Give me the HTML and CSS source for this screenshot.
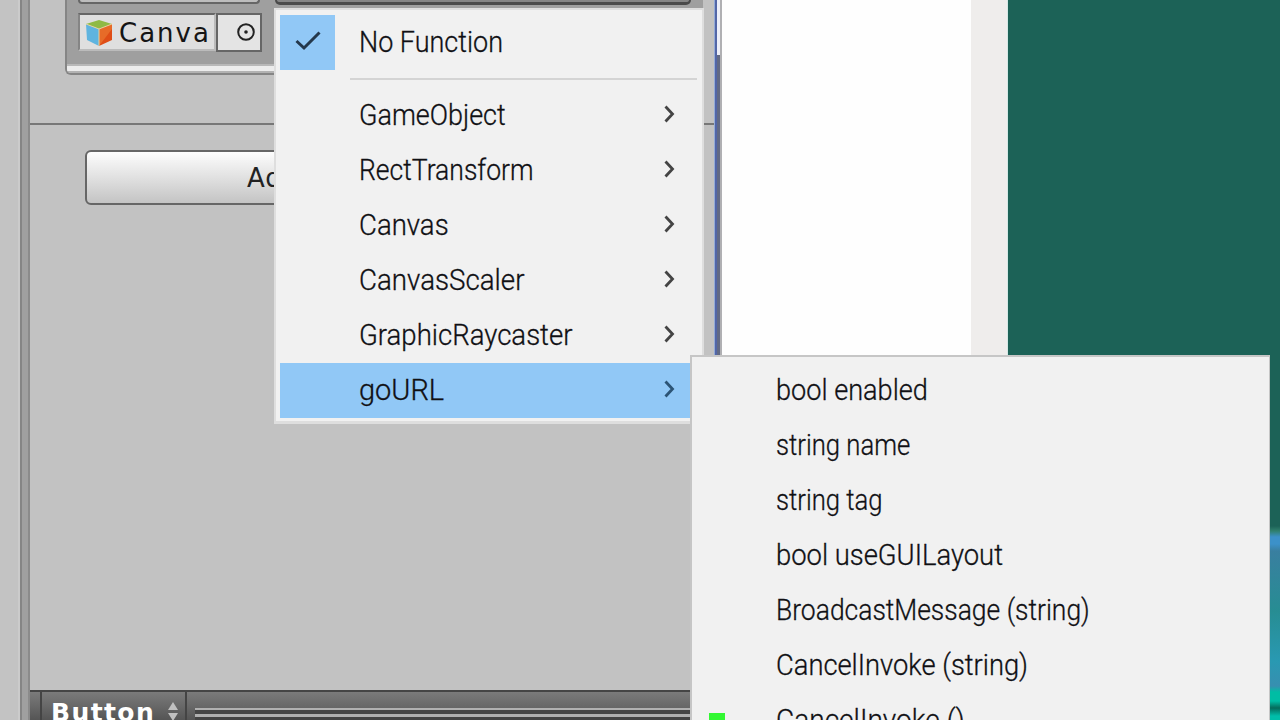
FILE: index.html
```html
<!DOCTYPE html>
<html lang="en">
<head>
<meta charset="utf-8">
<title>Inspector</title>
<link rel="stylesheet" href="styles.css">
</head>
<body>
<svg class="defs"><symbol id="chev" viewBox="0 0 14 22"><path d="M2.500 3.500 9.500 11 2.500 18.500" fill="none" stroke="currentColor" stroke-width="2.800"/></symbol></svg>
<div class="screen">
  <div class="gutter"></div>
  <div class="splitter"></div>
  <main class="inspector">
    <section class="component">
      <div class="event-box">
        <div class="event-body">
          <div class="fields-top"><div class="field-end"></div><div class="function-end"></div></div>
          <div class="object-field">
            <div class="object-name">
              <svg class="cube" viewBox="0 0 28 28"><path d="M14 1 27 5 14 10 1 5z" fill="#8fba45"/><path d="M1 5 14 10v17L2 21z" fill="#5fb4df"/><path d="M14 10 27 5v16l-13 6z" fill="#df4d16"/><path d="M14 10 27 5v5l-13 17z" fill="#e76b28"/><path d="M1 5 14 10 27 5M14 10v17" fill="none" stroke="#e4d2a1"/></svg>
              <span>Canva</span>
            </div>
            <div class="picker"><svg viewBox="0 0 20 20"><circle cx="10" cy="10" r="7.800" fill="none" stroke="#222" stroke-width="2"/><circle cx="10" cy="10" r="1.800" fill="#222"/></svg></div>
          </div>
        </div>
        <div class="event-foot"></div>
      </div>
    </section>
    <section class="add-area"><div class="add-button"><span>Ad</span></div></section>
    <footer class="preview">
      <div class="preview-pad"></div>
      <div class="preview-name"><span>Button</span><svg viewBox="0 0 10 20"><path d="M5 0 10 8H0zM0 11h10L5 19z" fill="#c0c0c0"/></svg></div>
      <div class="preview-grip"></div>
    </footer>
  </main>
  <div class="window-edge"><div class="edge-top"></div></div>
  <div class="page-white"></div>
  <div class="page-margin"></div>
  <div class="desktop"><div class="wallpaper"></div></div>
</div>

<nav class="menu functions">
  <div class="item checked"><div class="check"><svg viewBox="0 0 28 22"><path d="M2.500 11 10 18 25.500 2.500" fill="none" stroke="#24384c" stroke-width="3"/></svg></div><span class="t1">No Function</span></div>
  <div class="separator"></div>
  <div class="item"><span class="t2">GameObject</span><svg class="arrow"><use href="#chev"/></svg></div>
  <div class="item"><span class="t3">RectTransform</span><svg class="arrow"><use href="#chev"/></svg></div>
  <div class="item"><span class="t4">Canvas</span><svg class="arrow"><use href="#chev"/></svg></div>
  <div class="item"><span class="t5">CanvasScaler</span><svg class="arrow"><use href="#chev"/></svg></div>
  <div class="item"><span class="t6">GraphicRaycaster</span><svg class="arrow"><use href="#chev"/></svg></div>
  <div class="item selected"><span class="t7">goURL</span><svg class="arrow"><use href="#chev"/></svg></div>
</nav>

<nav class="menu members">
  <div class="item"><span class="m1">bool enabled</span></div>
  <div class="item"><span class="m2">string name</span></div>
  <div class="item"><span class="m3">string tag</span></div>
  <div class="item"><span class="m4">bool useGUILayout</span></div>
  <div class="item"><span class="m5">BroadcastMessage (string)</span></div>
  <div class="item"><span class="m6">CancelInvoke (string)</span></div>
  <div class="item"><i class="marker"></i><span class="m7">CancelInvoke ()</span></div>
</nav>
</body>
</html>
```
FILE: styles.css
```css
* { box-sizing: border-box; }
body { margin: 0; width: 1280px; height: 720px; overflow: hidden; position: relative; background: #c2c2c2; }
.defs { position: absolute; width: 0; height: 0; }
.screen { display: flex; height: 720px; }
.gutter { width: 20px; background: #c3c3c3; border-right: 2px solid #cbcbcb; }
.splitter { width: 10px; background: #a0a0a0; border-left: 2px solid #858585; border-right: 2px solid #8b8b8b; }
.inspector { width: 684px; display: flex; flex-direction: column; background: #c2c2c2; }
.component { height: 125px; padding-left: 35px; border-bottom: 2px solid #777; }
.event-box { height: 75px; border: solid #858585; border-width: 0 0 2px 2px; border-bottom-left-radius: 6px; display: flex; flex-direction: column; width: 638px; overflow: hidden; }
.event-body { height: 64px; background: #9f9f9f; padding-left: 11px; }
.event-foot { flex: 1; background: linear-gradient(#b8b8b8 0 2px, #ececec 2px 7px, #b2b2b2 7px); }
.fields-top { display: flex; gap: 15px; height: 13px; }
.field-end { width: 182px; height: 4px; background: #bdbdbd; border: solid #666; border-width: 0 2px 2px; border-radius: 0 0 5px 5px; }
.function-end { width: 416px; height: 5px; background: #858585; border: solid #4a4a4a; border-width: 0 2px 3px; border-radius: 0 0 6px 6px; }
.object-field { display: flex; width: 184px; height: 39px; }
.object-name { width: 138px; height: 38px; display: flex; align-items: center; background: #dfdfdf; border: 2px solid #bbb; border-top-color: #666; border-left-color: #858585; padding: 2px 0 0 5px; gap: 5px; font: 26px/34px "DejaVu Sans", sans-serif; color: #151515; }
.object-name span { letter-spacing: 2px; margin-left: 1px; }
.cube { width: 28px; height: 28px; flex: none; }
.picker { width: 46px; border: 2px solid #666; background: #e4e4e4; padding: 7px 0 0 18px; }
.picker svg { width: 20px; height: 20px; display: block; }
.add-area { height: 565px; padding: 25px 0 0 55px; }
.add-button { width: 414px; height: 55px; border: 2px solid #666; border-radius: 6px; background: linear-gradient(#fdfdfd, #e2e2e2 48%, #c4c4c4); padding-left: 160px; font: 26px/52px "DejaVu Sans", sans-serif; color: #222; letter-spacing: 1px; }
.preview { height: 30px; display: flex; background: linear-gradient(#7b7b7b, #555); border-top: 2px solid #454545; }
.preview-pad { width: 12px; border-right: 2px solid #444; }
.preview-name { width: 145px; border-right: 2px solid #444; padding: 6px 7px 0 9px; display: flex; justify-content: space-between; overflow: hidden; font: bold 25px/29px "DejaVu Sans", sans-serif; color: #fff; }
.preview-name span { letter-spacing: 1.400px; }
.preview-name svg { width: 10px; height: 20px; margin-top: 4px; flex: none; }
.preview-grip { flex: 1; margin-left: 8px; background: linear-gradient(transparent 0 16px, #b0b0b0 16px 18px, #464646 18px 22px, #b0b0b0 22px 25px, #444 25px); }
.window-edge { width: 8px; background: linear-gradient(90deg, #93abd8 0 1px, #5266a7 1px 3px, #616984 3px 6px, #b0b0b3 6px); }
.edge-top { height: 55px; margin: 0 2px 0 3px; background: #eceef8; }
.page-white { width: 249px; background: #fefefe; }
.page-margin { width: 37px; background: #efedec; border-right: 1px solid #d5e8e5; }
.desktop { flex: 1; background: #1c6257; display: flex; justify-content: flex-end; align-items: flex-end; }
.wallpaper { width: 14px; height: 194px; background: linear-gradient(#1c6257, #30806e 5px, #3c91c9 11px 18px, #397fa0 25px, #278d93 85px, #2999b2 135px, #378fb0 160px, #00bda4 166px 175px, #056b5b 182px, #00bda9 190px); }
.menu { position: absolute; background: #f1f1f1; font-family: Roboto, "Liberation Sans", sans-serif; font-size: 29px; font-weight: 300; color: #101014; -webkit-text-stroke: .3px #101014; }
.functions { left: 274px; top: 8px; width: 430px; height: 416px; padding: 5px 4px 0; border: solid #dedede; border-width: 2px 2px 3px; }
.members { left: 690px; top: 355px; width: 580px; height: 365px; padding: 6px 4px 0; border: solid #c6c6c6; border-width: 2px 1px 0 2px; overflow: hidden; }
.item { height: 55px; display: flex; align-items: center; padding-left: 80px; white-space: nowrap; line-height: 54px; }
.functions .item { margin-right: 3px; padding-left: 79px; }
.functions .checked { padding-left: 0; }
.check { width: 55px; height: 55px; background: #91c8f6; display: flex; align-items: center; justify-content: center; margin-right: 24px; }
.check svg { width: 28px; height: 22px; margin-top: -3px; }
.functions .selected { background: #91c8f6; }
.separator { height: 2px; margin: 8px 1px 8px 70px; background: #d4d4d4; }
.arrow { width: 14px; height: 22px; margin: -3px 18px 0 auto; color: #444; }
.selected .arrow { color: #2c5475; }
.item span { margin-top: -2px; transform-origin: left; }
.item .t1 { transform: scaleX(.93); }
.item .t2 { transform: scaleX(.93); }
.item .t3 { transform: scaleX(.915); }
.item .t4 { transform: scaleX(.95); }
.item .t5 { transform: scaleX(.955); }
.item .t6 { transform: scaleX(.95); }
.item .t7 { transform: scaleX(1); }
.item .m1 { transform: scaleX(.935); }
.item .m2 { transform: scaleX(.885); }
.item .m3 { transform: scaleX(.885); }
.item .m4 { transform: scaleX(.945); }
.item .m5 { transform: scaleX(.912); }
.item .m6 { transform: scaleX(.942); }
.item .m7 { transform: scaleX(.967); }
.members .item { position: relative; }
.marker { position: absolute; left: 13px; top: 20px; width: 16px; height: 20px; background: #32f832; }
```
